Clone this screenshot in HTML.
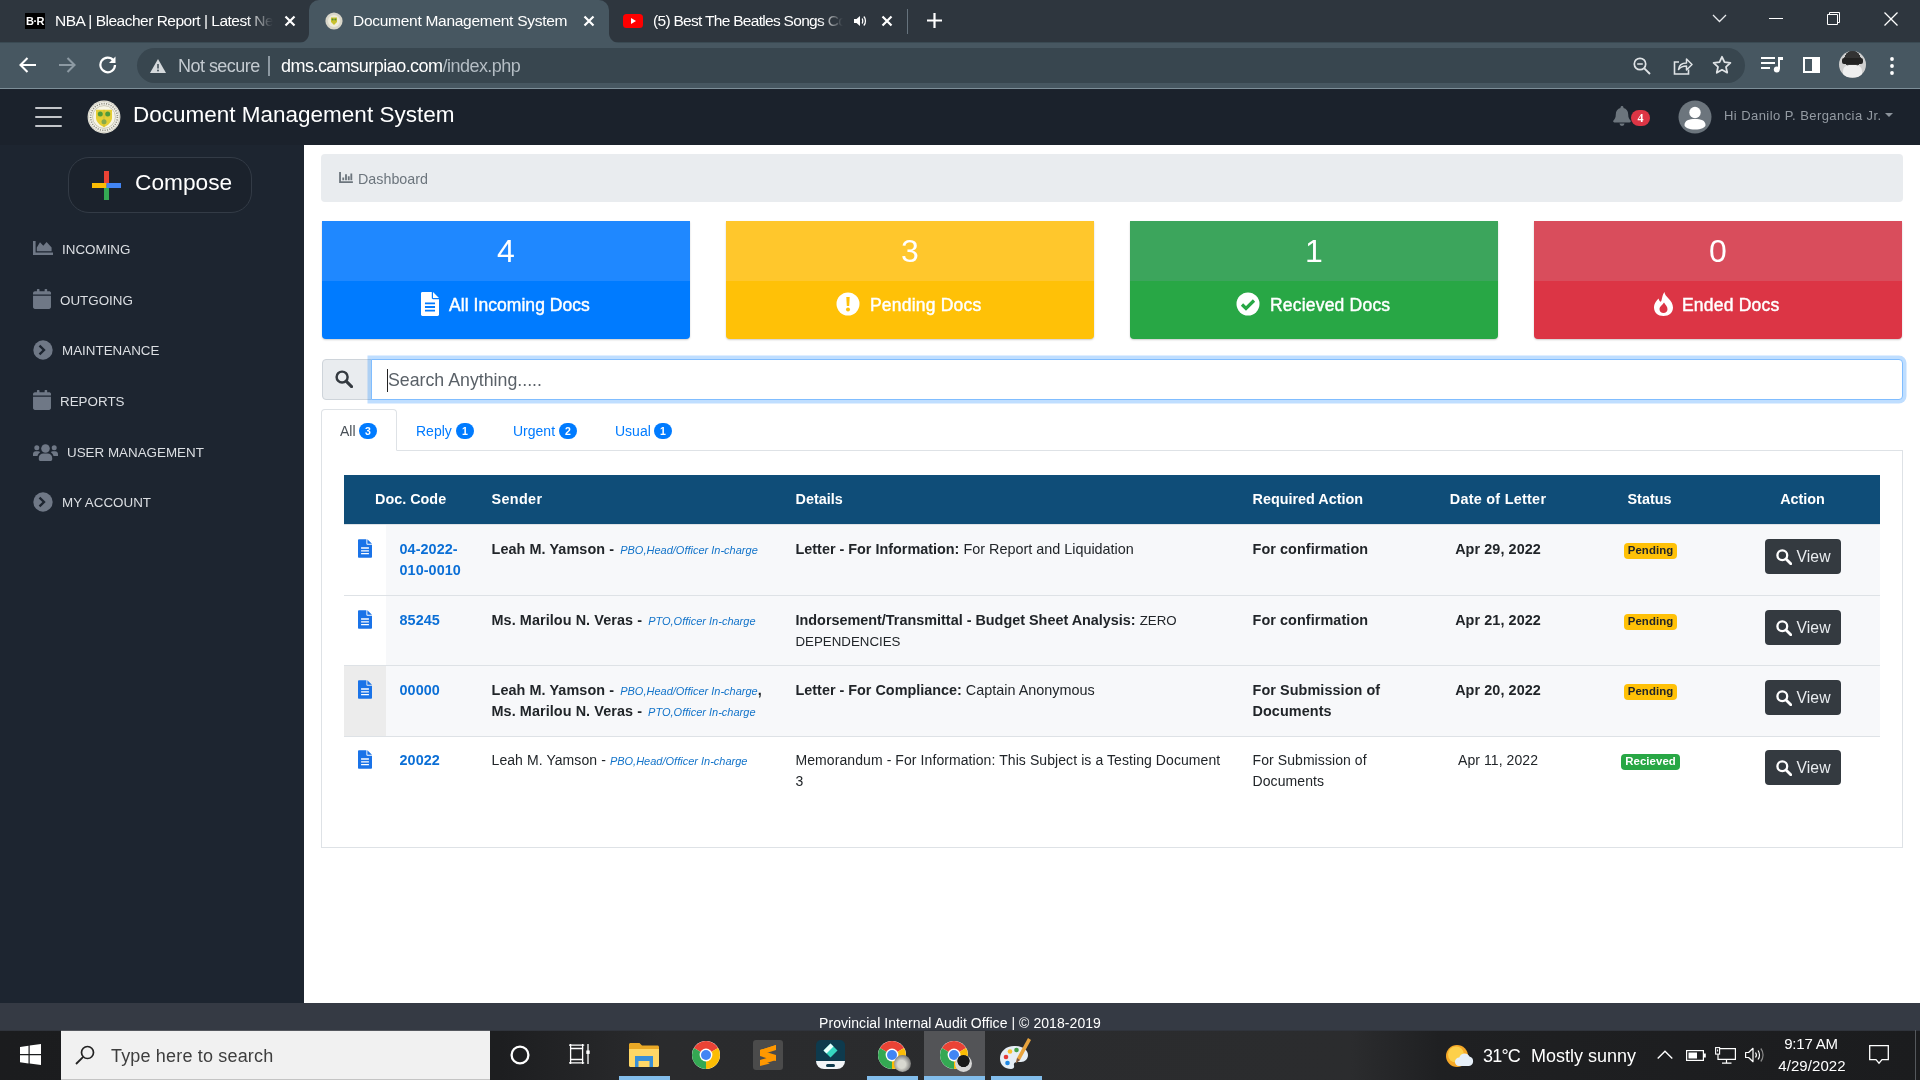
<!DOCTYPE html>
<html lang="en">
<head>
<meta charset="utf-8">
<title>Document Management System</title>
<style>
*{box-sizing:border-box;margin:0;padding:0}
html,body{width:1920px;height:1080px;overflow:hidden;background:#fff;font-family:"Liberation Sans",sans-serif;}
body{position:relative;filter:contrast(1)}
.abs{position:absolute}
svg{display:block}
/* ---------- browser chrome ---------- */
#tabstrip{position:absolute;left:0;top:0;width:1920px;height:42px;background:#2e363e}
#toolbar{position:absolute;left:0;top:42px;width:1920px;height:47px;background:#475761;border-bottom:1px solid #7d8e98;border-top:1px solid #3a4a53}
.tabtitle{position:absolute;top:11px;font-size:15.5px;color:#fff;white-space:nowrap;overflow:hidden;letter-spacing:-0.28px;line-height:20px}
#acttab{position:absolute;left:309px;top:0;width:300px;height:43px;background:#475761;border-radius:10px 10px 0 0;z-index:3}
#omni{position:absolute;left:137px;top:5px;width:1608px;height:35px;border-radius:18px;background:#38464f}

.ico{position:absolute}
.wc{position:absolute;top:0;width:46px;height:36px}
.tb-t{position:absolute;white-space:nowrap;line-height:22px;top:12px;font-size:18px;letter-spacing:-0.53px}
#tabstrip > *{z-index:4}
#acttab:before,#acttab:after{content:'';position:absolute;bottom:0;width:10px;height:10px}
#acttab:before{left:-10px;background:radial-gradient(circle at 0 0,transparent 9.5px,#475761 10.5px)}
#acttab:after{right:-10px;background:radial-gradient(circle at 100% 0,transparent 9.5px,#475761 10.5px)}
/* ---------- site ---------- */
#nav{position:absolute;left:0;top:89px;width:1920px;height:56px;background:#1b222c}
#side{position:absolute;left:0;top:145px;width:304px;height:858px;background:#1d2530}
#main{position:absolute;left:304px;top:145px;width:1616px;height:858px;background:#fff}

#nav .title{position:absolute;left:133px;top:11px;font-size:22.5px;line-height:30px;color:#fff;white-space:nowrap}
.hb{position:absolute;left:35px;width:27px;height:2px;background:#c3c6ca;border-radius:1px}
#side .mi{position:absolute;left:0;width:304px;height:20px;color:#dcdfe3;font-size:13.4px;line-height:20px;white-space:nowrap}
#side .mi span{position:absolute;top:1px}
#side .mi svg{position:absolute}
#compose{position:absolute;left:68px;top:12px;width:184px;height:56px;border:1px solid #333b46;border-radius:21px;background:#1b222c}
#compose span{position:absolute;left:66px;top:8.5px;font-size:22.7px;line-height:30px;color:#fff}

/* ---------- main ---------- */
#bc{position:absolute;left:17px;top:9px;width:1582px;height:47.5px;background:#e9ecef;border-radius:4px}
#bc span{position:absolute;left:37px;top:16px;font-size:14.3px;line-height:18px;color:#6c757d}
.card{position:absolute;top:76px;width:368px;height:118px;border-radius:1px 1px 4px 4px;overflow:hidden;box-shadow:0 1px 2px rgba(0,0,0,.2),inset 0 1px 0 rgba(0,0,0,.12)}
.card .n{position:absolute;left:0;top:0;width:100%;height:60px;color:#fff;font-size:32px;line-height:60px;text-align:center}
.card .l{position:absolute;left:0;top:60px;width:100%;height:58px;color:#fff;font-size:17.5px;line-height:22px;white-space:nowrap;-webkit-text-stroke:.45px #fff;letter-spacing:.2px}
.card .l span{position:absolute;top:13px}
.card .l svg{position:absolute}
#sprep{position:absolute;left:18px;top:214px;width:50px;height:41px;background:#e9ecef;border:1px solid #ced4da;border-radius:4px 0 0 4px}
#sinp{position:absolute;left:67px;top:214px;width:1532px;height:41px;background:#fff;border:1px solid #80bdff;border-radius:0 4px 4px 0;box-shadow:0 0 0 3.5px rgba(0,123,255,.25)}
#sinp span{position:absolute;left:16px;top:9px;font-size:17.75px;line-height:22px;color:#5a6168;white-space:nowrap}
#sinp i{position:absolute;left:15px;top:9px;width:1px;height:23px;background:#222}
#tabsline{position:absolute;left:17px;top:305px;width:1582px;height:1px;background:#dee2e6}
#tabact{position:absolute;left:17px;top:264px;width:76px;height:42px;border:1px solid #dee2e6;border-bottom-color:#fff;border-radius:4px 4px 0 0;background:#fff}
.tb{position:absolute;top:277px;font-size:14px;line-height:18px;color:#007bff;white-space:nowrap}
.bdg{position:absolute;top:278px;width:18px;height:16px;border-radius:8px;background:#007bff;color:#fff;font-size:10.5px;font-weight:bold;line-height:16px;text-align:center}
#tabbox{position:absolute;left:17px;top:305px;width:1582px;height:398px;border:1px solid #dee2e6;border-top:none}
table{position:absolute;left:40px;top:330px;width:1536px;border-collapse:separate;border-spacing:0;table-layout:fixed;font-size:14.4px;line-height:21px;color:#212529}
th{background:#0f4d78;color:#fff;font-weight:bold;text-align:left;padding:14px 13.5px 0;height:49px;vertical-align:top}
td{padding:14px 13.5px 0;vertical-align:top;border-top:1px solid #dee2e6;height:71px;background:#f7f8fa}
tbody tr:nth-child(2n) td{height:70px}
tr.u td{font-weight:bold;letter-spacing:.08px}
tr.u td.d{font-weight:normal;letter-spacing:0}
tr.r td{background:#fff;font-size:14px;letter-spacing:.08px;padding-top:13px}
tr.r em{margin-left:0}
td.c,th.c{text-align:center}
a.dc{color:#0b6fd6;font-weight:bold}
em{font-size:11px;line-height:1;color:#1273c9;font-style:italic;font-weight:normal;letter-spacing:0;margin-left:2px}
.st{display:inline-block;width:53px;height:16px;border-radius:4px;font-size:11.4px;font-weight:bold;line-height:15px;text-align:center;position:relative;top:4px;left:1px;vertical-align:top}
.st.p{background:#ffc107;color:#212529}
.st.g{background:#28a745;color:#fff;width:59px}
.vb{display:inline-block;position:relative;width:76px;height:35px;border-radius:4px;background:#343a40;color:#e9ecef;font-size:15.7px;line-height:35px;font-weight:normal;text-align:left;margin-top:0}
.vb svg{position:absolute;left:11px;top:10px}
.vb span{position:absolute;left:32px;top:0}
#footer{position:absolute;left:0;top:1003px;width:1920px;height:27px;background:#353a44}
#taskbar{position:absolute;left:0;top:1030px;width:1920px;height:50px;background:linear-gradient(90deg,#1b1c1e 0,#1d1e20 500px,#2a2b2d 660px,#2b2c2e 1350px,#1f2022 1440px,#1b1c1e 1920px);overflow:hidden;box-shadow:inset 0 1px 0 #30343c}

/* ---------- footer / taskbar ---------- */
#footer span{position:absolute;left:0;width:1920px;top:12px;text-align:center;color:#fff;font-size:14px;line-height:16px;letter-spacing:.06px;white-space:nowrap}
#taskbar .t{position:absolute;color:#fff;white-space:nowrap;font-family:"Liberation Sans",sans-serif}
#tsearch{position:absolute;left:61px;top:0;width:429px;height:50px;background:#f1f1f1;border-bottom:1px solid #c4c4c4;border-top:1px solid #55585f}
#tsearch span{position:absolute;left:50px;top:12.5px;font-size:18px;line-height:24px;color:#3e3e3e;letter-spacing:.17px}
.ul{position:absolute;top:46px;height:4px;background:#82bdeb}
</style>
</head>
<body>
<div id="tabstrip">
<div id="acttab"></div>
<!-- tab 1 -->
<div class="abs" style="left:25px;top:13px;width:20px;height:16px;background:#000;color:#fff;font-size:11px;font-weight:bold;line-height:16px;text-align:center;letter-spacing:-0.5px;font-family:'Liberation Sans Narrow','Liberation Sans',sans-serif">B·R</div>
<div class="tabtitle" id="tt1" style="left:55px;width:218px;letter-spacing:-.5px;-webkit-mask-image:linear-gradient(90deg,#000 88%,transparent)">NBA | Bleacher Report | Latest News</div>
<svg class="ico" style="left:284px;top:15px" width="12" height="12" viewBox="0 0 12 12"><path d="M1.5 1.5L10.5 10.5M10.5 1.5L1.5 10.5" stroke="#fff" stroke-width="2.2"/></svg>
<!-- tab 2 -->
<svg class="ico" style="left:325px;top:12px" width="18" height="18" viewBox="0 0 18 18"><circle cx="9" cy="9" r="8.6" fill="#d9d6c9"/><circle cx="9" cy="9" r="6" fill="#efecd9"/><path d="M6 5.5h6v4.5l-3 3-3-3z" fill="#c9c12d"/><circle cx="7.6" cy="7.6" r="1" fill="#4c8b3b"/><circle cx="10.4" cy="7.6" r="1" fill="#4c8b3b"/></svg>
<div class="tabtitle" id="tt2" style="left:353px;width:220px">Document Management System</div>
<svg class="ico" style="left:583px;top:15px" width="12" height="12" viewBox="0 0 12 12"><path d="M1.5 1.5L10.5 10.5M10.5 1.5L1.5 10.5" stroke="#fff" stroke-width="2.2"/></svg>
<!-- tab 3 -->
<svg class="ico" style="left:623px;top:14px" width="20" height="14" viewBox="0 0 20 14"><rect width="20" height="14" rx="3.5" fill="#f00"/><path d="M8 4l5 3-5 3z" fill="#fff"/></svg>
<div class="tabtitle" id="tt3" style="left:653px;width:190px;letter-spacing:-.7px;-webkit-mask-image:linear-gradient(90deg,#000 88%,transparent)">(5) Best The Beatles Songs Collection</div>
<svg class="ico" style="left:853px;top:14px" width="14" height="14" viewBox="0 0 14 14"><path d="M1 5h2.5l3.5-3v10l-3.5-3H1z" fill="#fff"/><path d="M9 4.5c1 .8 1 4.200 0 5M10.800 2.500c2.200 2 2.200 7 0 9" stroke="#fff" stroke-width="1.300" fill="none"/></svg>
<svg class="ico" style="left:881px;top:15px" width="12" height="12" viewBox="0 0 12 12"><path d="M1.500 1.500L10.500 10.500M10.500 1.500L1.500 10.500" stroke="#fff" stroke-width="2.200"/></svg>
<div class="abs" style="left:907px;top:9px;width:1px;height:25px;background:#66737d"></div>
<svg class="ico" style="left:927px;top:13px" width="15" height="15" viewBox="0 0 15 15"><path d="M7.500 0v15M0 7.500h15" stroke="#fff" stroke-width="2.200"/></svg>
<!-- window controls -->
<svg class="ico" style="left:1712px;top:14px" width="15" height="9" viewBox="0 0 15 9"><path d="M1 1l6.500 6.500L14 1" stroke="#e8eaed" stroke-width="1.300" fill="none"/></svg>
<svg class="ico" style="left:1769px;top:18px" width="14" height="1" viewBox="0 0 14 1"><path d="M0 .5h14" stroke="#fff" stroke-width="1"/></svg>
<svg class="ico" style="left:1827px;top:12px" width="13" height="13" viewBox="0 0 13 13"><path d="M.5 2.500h10v10H.5z" stroke="#fff" stroke-width="1" fill="none"/><path d="M2.500 2.500V.5h10v10h-2" stroke="#fff" stroke-width="1" fill="none"/></svg>
<svg class="ico" style="left:1884px;top:12px" width="14" height="14" viewBox="0 0 14 14"><path d="M.5.5l13 13M13.500.5l-13 13" stroke="#fff" stroke-width="1.300"/></svg>
</div>
<div id="toolbar">
<svg class="ico" style="left:19px;top:14px" width="17" height="16" viewBox="0 0 17 16"><path d="M8.500 1L1.500 8l7 7M1.500 8H17" stroke="#fff" stroke-width="2.100" fill="none"/></svg>
<svg class="ico" style="left:59px;top:14px" width="17" height="16" viewBox="0 0 17 16"><path d="M8.500 1l7 7-7 7M15.500 8H0" stroke="#8d9aa3" stroke-width="2.100" fill="none"/></svg>
<svg class="ico" style="left:98px;top:12px" width="19" height="19" viewBox="0 0 19 19"><path d="M15.500 5.500A7.300 7.300 0 1 0 17 10" stroke="#fff" stroke-width="2.200" fill="none"/><path d="M17.500 1.500v6.500H11z" fill="#fff"/></svg>
<div id="omni">
<svg class="ico" style="left:13px;top:11px" width="16" height="14" viewBox="0 0 16 14"><path d="M8 0l8 14H0z" fill="#d5d9dc"/><path d="M8 5v4.500" stroke="#3a4852" stroke-width="1.500"/><circle cx="8" cy="11.500" r=".9" fill="#3a4852"/></svg>
<div class="tb-t" id="ns" style="left:41px;top:7px;color:#c3cad0">Not secure</div>
<div class="abs" style="left:131px;top:8px;width:2px;height:20px;background:#8d99a2"></div>
<div class="tb-t" id="url" style="left:144px;top:7px;color:#fff">dms.camsurpiao.com<span style="color:#b4bdc4">/index.php</span></div>
<svg class="ico" style="left:1496px;top:9px" width="18" height="18" viewBox="0 0 18 18"><circle cx="7" cy="7" r="5.700" stroke="#dfe3e6" stroke-width="1.700" fill="none"/><path d="M11.300 11.300L17 17" stroke="#dfe3e6" stroke-width="1.900"/><path d="M4.200 7h5.600" stroke="#dfe3e6" stroke-width="1.500"/></svg>
<svg class="ico" style="left:1536px;top:8px" width="20" height="19" viewBox="0 0 20 19"><path d="M6 6H1.500v12h14v-4.500" stroke="#dfe3e6" stroke-width="1.600" fill="none"/><path d="M5.500 13.500c.5-4 3.500-6.500 8-6.500V3l5.500 5.500-5.500 5.500v-4c-3.500 0-6 1-8 3.500z" stroke="#dfe3e6" stroke-width="1.500" fill="none" stroke-linejoin="round"/></svg>
<svg class="ico" style="left:1575px;top:7px" width="20" height="20" viewBox="0 0 20 20"><path d="M10 1.800l2.500 5.400 5.900.7-4.400 4 1.200 5.800L10 14.800l-5.200 2.900L6 11.900l-4.400-4 5.900-.7z" stroke="#dfe3e6" stroke-width="1.800" fill="none" stroke-linejoin="round"/></svg>
</div>
<svg class="ico" style="left:1761px;top:13px" width="22" height="18" viewBox="0 0 22 18"><path d="M0 2h14M0 7h14M0 12h9" stroke="#fff" stroke-width="2.200"/><path d="M18 2v11" stroke="#fff" stroke-width="2"/><path d="M17 1h5v3h-5z" fill="#fff"/><circle cx="15.800" cy="13.500" r="3" fill="#fff"/></svg>
<svg class="ico" style="left:1803px;top:14px" width="17" height="16" viewBox="0 0 17 16"><rect x="1" y="1" width="15" height="14" stroke="#fff" stroke-width="2" fill="none"/><rect x="9" y="1" width="7" height="14" fill="#fff"/></svg>
<div class="abs" style="left:1839px;top:8px;width:27px;height:27px;border-radius:50%;background:radial-gradient(circle at 50% 30%,#333 0 35%,#cfcfcf 36% 100%);overflow:hidden"><div class="abs" style="left:4px;top:14px;width:19px;height:12px;background:#eee;border-radius:6px 6px 0 0"></div><div class="abs" style="left:3px;top:7px;width:21px;height:6px;background:#222;border-radius:2px"></div></div>
<svg class="ico" style="left:1890px;top:14px" width="4" height="18" viewBox="0 0 4 18"><circle cx="2" cy="2" r="1.900" fill="#fff"/><circle cx="2" cy="9" r="1.900" fill="#fff"/><circle cx="2" cy="16" r="1.900" fill="#fff"/></svg>
</div>
<div id="nav">
<div class="hb" style="top:18px"></div><div class="hb" style="top:27px"></div><div class="hb" style="top:36px"></div>
<svg class="ico" style="left:87px;top:11px" width="34" height="34" viewBox="0 0 34 34"><circle cx="17" cy="17" r="16.400" fill="#f2f1ea"/><circle cx="17" cy="17" r="15.600" fill="none" stroke="#c9c7b8" stroke-width=".8"/><circle cx="17" cy="17" r="13.400" fill="none" stroke="#8f8e7e" stroke-width="1.600" stroke-dasharray="1.100 1.300"/><circle cx="17" cy="17" r="11.400" fill="#f7f5e6" stroke="#b9b6a0" stroke-width=".7"/><path d="M9 9.800h16v8c0 4.500-3.800 7.200-8 9.400-4.200-2.200-8-4.900-8-9.400z" fill="#e6cf34"/><path d="M10.300 11h6v6.500h-6zM17.700 11h6v6.500h-6z" fill="#dccb3c"/><path d="M17 9.800v17.400" stroke="#c9b52a" stroke-width=".7"/><circle cx="13.300" cy="14" r="2.500" fill="#4f9a3a"/><circle cx="20.700" cy="14" r="2.500" fill="#4f9a3a"/><circle cx="17" cy="21.800" r="2.500" fill="#86a94c"/></svg>
<div class="title" id="ttl">Document Management System</div>
<svg class="ico" style="left:1613px;top:17px" width="18" height="20" viewBox="0 0 18 20"><path d="M9 0c.9 0 1.500.6 1.500 1.500v.6c2.900.7 4.700 3.100 4.700 6.200 0 3.700 1.200 5.100 2.300 6.200.7.700.2 2-.9 2H1.400c-1.100 0-1.600-1.300-.9-2 1.100-1.100 2.300-2.500 2.300-6.200 0-3.100 1.800-5.500 4.700-6.200v-.6C7.500.6 8.100 0 9 0zM6.500 17.500h5a2.500 2.500 0 0 1-5 0z" fill="#6c757d"/></svg>
<div class="abs" style="left:1631px;top:21px;width:19px;height:16px;border-radius:8px;background:#dc3545;color:#fff;font:bold 12px/16px 'Liberation Serif',serif;text-align:center">4</div>
<svg class="ico" style="left:1678px;top:11px" width="34" height="34" viewBox="0 0 34 34"><circle cx="17" cy="17" r="16.500" fill="#6c757d"/><circle cx="17" cy="12.500" r="5.700" fill="#fff"/><path d="M6.500 25c0-4.500 4.500-6 10.500-6s10.500 1.500 10.500 6c0 2.500-4.500 4.500-10.500 4.500S6.500 27.500 6.500 25z" fill="#fff"/></svg>
<div class="abs" id="hi" style="left:1724px;top:19px;font-size:13px;line-height:16px;color:#949ba3;white-space:nowrap;letter-spacing:.43px">Hi Danilo P. Bergancia Jr.</div>
<svg class="ico" style="left:1885px;top:24px" width="8" height="4" viewBox="0 0 8 4"><path d="M0 0h8L4 4z" fill="#8c939b"/></svg>
</div>
<div id="side">
<div id="compose"><svg class="ico" style="left:23px;top:13px" width="29" height="29" viewBox="0 0 29 29"><rect x="12" y="0" width="5" height="14.500" fill="#ea4335"/><rect x="12" y="14.500" width="5" height="14.500" fill="#34a853"/><rect x="0" y="12" width="14.500" height="5" fill="#fbbc04"/><rect x="14.500" y="12" width="14.500" height="5" fill="#4285f4"/></svg><span id="cmp">Compose</span></div>
<div class="mi" style="top:94px"><svg style="left:33px;top:2px" width="20" height="14" viewBox="0 0 20 14"><path d="M0 0h2.600v11.400H20V14H0z" fill="#6f7886"/><path d="M3.800 10.200V6.500L7 1.200l3.300 3.600L13.600 1l5 5.500v3.700z" fill="#6f7886"/></svg><span id="m1" style="left:62px">INCOMING</span></div>
<div class="mi" style="top:145px"><svg style="left:33px;top:-1px" width="18" height="20" viewBox="0 0 17.500 19.500"><path d="M0 6.500h17.500V17.600c0 1-.8 1.900-1.900 1.900H1.900C.8 19.500 0 18.600 0 17.600zM0 5.300V4.200c0-1 .8-1.900 1.900-1.900h1.900V.6c0-.3.300-.6.600-.6h1.300c.3 0 .6.300.6.600v1.700h5V.6c0-.3.300-.6.600-.6h1.300c.3 0 .6.300.6.600v1.700h1.900c1 0 1.900.8 1.900 1.900v1.100z" fill="#6f7886"/></svg><span id="m2" style="left:60px">OUTGOING</span></div>
<div class="mi" style="top:195px"><svg style="left:33px;top:0px" width="20" height="20" viewBox="0 0 20 20"><circle cx="10" cy="10" r="9.700" fill="#6f7886"/><path d="M7.300 4.800l5.400 5.200-5.400 5.200-1.600-1.600 3.700-3.600-3.700-3.600z" fill="#1d2530"/></svg><span id="m3" style="left:62px">MAINTENANCE</span></div>
<div class="mi" style="top:246px"><svg style="left:33px;top:-1px" width="18" height="20" viewBox="0 0 17.500 19.500"><path d="M0 6.500h17.500V17.600c0 1-.8 1.900-1.900 1.900H1.900C.8 19.500 0 18.600 0 17.600zM0 5.300V4.200c0-1 .8-1.900 1.900-1.900h1.900V.6c0-.3.300-.6.600-.6h1.300c.3 0 .6.300.6.600v1.700h5V.6c0-.3.300-.6.600-.6h1.300c.3 0 .6.300.6.600v1.700h1.900c1 0 1.900.8 1.900 1.900v1.100z" fill="#6f7886"/></svg><span id="m4" style="left:60px">REPORTS</span></div>
<div class="mi" style="top:297px"><svg style="left:33px;top:2px" width="25" height="17" viewBox="0 0 25 17"><circle cx="3.800" cy="3.800" r="2.500" fill="#6f7886"/><circle cx="21.200" cy="3.800" r="2.500" fill="#6f7886"/><circle cx="12.500" cy="4.500" r="4.300" fill="#6f7886"/><path d="M0 10c0-1.500 1.200-2.700 2.700-2.700h2.500c.8 0 1.500.3 2 .9-1.500.9-2.500 2.200-2.700 3.800H0zM25 10c0-1.500-1.200-2.700-2.700-2.700h-2.500c-.8 0-1.500.3-2 .9 1.500.9 2.500 2.200 2.700 3.800H25zM5.800 14c0-2.600 2.100-4.400 4.600-4.400h4.200c2.500 0 4.600 1.800 4.600 4.400v1.200c0 1-.8 1.800-1.800 1.800H7.600c-1 0-1.800-.8-1.800-1.800z" fill="#6f7886"/></svg><span id="m5" style="left:67px">USER MANAGEMENT</span></div>
<div class="mi" style="top:347px"><svg style="left:33px;top:0px" width="20" height="20" viewBox="0 0 20 20"><circle cx="10" cy="10" r="9.700" fill="#6f7886"/><path d="M7.300 4.800l5.400 5.200-5.400 5.200-1.600-1.600 3.700-3.600-3.700-3.600z" fill="#1d2530"/></svg><span id="m6" style="left:62px">MY ACCOUNT</span></div>
</div>
<div id="main">
<div id="bc"><svg class="ico" style="left:18px;top:18px" width="14" height="11" viewBox="0 0 15 12"><path d="M0 0h2v10h13v2H0z" fill="#6c757d"/><path d="M3.500 6h2v3h-2zM6.500 2.500h2V9h-2zM9.500 4.500h2V9h-2zM12.300 1.500h2V9h-2z" fill="#6c757d"/></svg><span id="bct">Dashboard</span></div>
<div class="card" style="left:18px;background:#007bff"><div class="n" style="background:#1f88ff">4</div><div class="l"><svg style="left:99px;top:11px" width="18" height="24" viewBox="0 0 15 20"><path d="M0 1.200C0 .5.500 0 1.200 0H9v5c0 .6.400 1 1 1h5v12.800c0 .7-.5 1.200-1.200 1.200H1.200C.5 20 0 19.500 0 18.800zM10 0l5 5h-5z" fill="#fff"/><path d="M3.300 9.500h8.400M3.300 12.500h8.400M3.300 15.500h8.400" stroke="#007bff" stroke-width="1.500"/></svg><span id="c1" style="left:127px;letter-spacing:.05px">All Incoming Docs</span></div></div>
<div class="card" style="left:422px;background:#ffc107"><div class="n" style="background:#ffc72c">3</div><div class="l"><svg style="left:110px;top:11px" width="24" height="24" viewBox="0 0 24 24"><circle cx="12" cy="12" r="11.500" fill="#fff"/><path d="M10.300 5h3.400l-.5 9h-2.400z" fill="#ffc107"/><circle cx="12" cy="17.600" r="2" fill="#ffc107"/></svg><span id="c2" style="left:144px">Pending Docs</span></div></div>
<div class="card" style="left:826px;background:#28a745"><div class="n" style="background:#3ca55c">1</div><div class="l"><svg style="left:106px;top:11px" width="24" height="24" viewBox="0 0 24 24"><circle cx="12" cy="12" r="11.500" fill="#fff"/><path d="M6 12.500l4 4 8-8" stroke="#28a745" stroke-width="3.200" fill="none"/></svg><span id="c3" style="left:140px">Recieved Docs</span></div></div>
<div class="card" style="left:1230px;background:#dc3545"><div class="n" style="background:#d94d5c">0</div><div class="l"><svg style="left:120px;top:11px" width="19" height="24" viewBox="0 0 19 24"><path d="M10.500 0c0 5 8.500 8 8.500 15.500 0 5-4 8.500-9.500 8.500S0 20.500 0 15.500C0 11 3 8.500 4.500 6.500c1 3 2 3.500 2.500 3C8 8.500 8 3 10.500 0z" fill="#fff"/><path d="M9.500 21c-2.300 0-4-1.500-4-3.800 0-2.500 2.500-3.700 4.500-6.700 1.500 2.500 3.500 4 3.500 6.700 0 2.300-1.700 3.800-4 3.800z" fill="#dc3545"/></svg><span id="c4" style="left:148px">Ended Docs</span></div></div>
<div id="sprep"><svg class="ico" style="left:12px;top:10px" width="18" height="18" viewBox="0 0 19 19"><circle cx="7.500" cy="7.500" r="5.800" stroke="#343a40" stroke-width="2.600" fill="none"/><path d="M12 12l5.500 5.500" stroke="#343a40" stroke-width="3.200" stroke-linecap="round"/></svg></div>
<div id="sinp"><i></i><span id="sph">Search Anything.....</span></div>
<div id="tabsline"></div><div id="tabact"></div>
<div class="tb" id="t1" style="left:36px;color:#495057">All</div><div class="bdg" style="left:55px">3</div>
<div class="tb" id="t2" style="left:112px">Reply</div><div class="bdg" style="left:152px">1</div>
<div class="tb" id="t3" style="left:209px">Urgent</div><div class="bdg" style="left:255px">2</div>
<div class="tb" id="t4" style="left:311px">Usual</div><div class="bdg" style="left:350px">1</div>
<div id="tabbox"></div>
<table>
<colgroup><col style="width:42px"><col style="width:92px"><col style="width:304px"><col style="width:457px"><col style="width:183px"><col style="width:152px"><col style="width:151px"><col style="width:155px"></colgroup>
<thead><tr><th colspan="2" style="padding-left:31px"><span id="h1">Doc. Code</span></th><th><span id="h2" style="letter-spacing:.35px">Sender</span></th><th><span id="h3">Details</span></th><th><span id="h4">Required Action</span></th><th class="c"><span id="h5" style="letter-spacing:.27px">Date of Letter</span></th><th class="c"><span id="h6">Status</span></th><th class="c"><span id="h7">Action</span></th></tr></thead>
<tbody>
<tr class="u"><td class="i" style="background:#fff"><svg class="di" width="14" height="19" viewBox="0 0 15 20"><path d="M0 1.200C0 .5.500 0 1.200 0H9v5c0 .6.400 1 1 1h5v12.800c0 .7-.5 1.200-1.200 1.200H1.200C.5 20 0 19.500 0 18.800zM10 0l5 5h-5z" fill="#1a73e8"/><path d="M3.300 9.500h8.400M3.300 12.500h8.400M3.300 15.500h8.400" stroke="#fff" stroke-width="1.500"/></svg></td><td><a class="dc" id="r1a">04-2022-<br>010-0010</a></td><td><span id="r1b">Leah M. Yamson -</span> <em id="r1e">PBO,Head/Officer In-charge</em></td><td class="d"><b id="r1c">Letter - For Information:</b> <span id="r1d">For Report and Liquidation</span></td><td><span id="r1f">For confirmation</span></td><td class="c"><span id="r1g">Apr 29, 2022</span></td><td class="c"><span class="st p">Pending</span></td><td class="c v"><div class="vb"><svg width="16" height="16" viewBox="0 0 16 16"><circle cx="6.300" cy="6.300" r="4.900" stroke="#fff" stroke-width="2.300" fill="none"/><path d="M10 10l4.800 4.800" stroke="#fff" stroke-width="2.800" stroke-linecap="round"/></svg><span>View</span></div></td></tr>
<tr class="u"><td class="i" style="background:#fff"><svg class="di" width="14" height="19" viewBox="0 0 15 20"><path d="M0 1.200C0 .5.500 0 1.200 0H9v5c0 .6.400 1 1 1h5v12.800c0 .7-.5 1.200-1.200 1.200H1.200C.5 20 0 19.500 0 18.800zM10 0l5 5h-5z" fill="#1a73e8"/><path d="M3.300 9.500h8.400M3.300 12.500h8.400M3.300 15.500h8.400" stroke="#fff" stroke-width="1.500"/></svg></td><td><a class="dc">85245</a></td><td><span id="r2b">Ms. Marilou N. Veras -</span> <em>PTO,Officer In-charge</em></td><td class="d"><b id="r2c">Indorsement/Transmittal - Budget Sheet Analysis:</b> <span style="font-size:13.3px">ZERO</span><br><span style="font-size:13.3px">DEPENDENCIES</span></td><td>For confirmation</td><td class="c">Apr 21, 2022</td><td class="c"><span class="st p">Pending</span></td><td class="c v"><div class="vb"><svg width="16" height="16" viewBox="0 0 16 16"><circle cx="6.300" cy="6.300" r="4.900" stroke="#fff" stroke-width="2.300" fill="none"/><path d="M10 10l4.800 4.800" stroke="#fff" stroke-width="2.800" stroke-linecap="round"/></svg><span>View</span></div></td></tr>
<tr class="u"><td class="i" style="background:#ececec"><svg class="di" width="14" height="19" viewBox="0 0 15 20"><path d="M0 1.200C0 .5.500 0 1.200 0H9v5c0 .6.400 1 1 1h5v12.800c0 .7-.5 1.200-1.200 1.200H1.200C.5 20 0 19.500 0 18.800zM10 0l5 5h-5z" fill="#1a73e8"/><path d="M3.300 9.500h8.400M3.300 12.500h8.400M3.300 15.500h8.400" stroke="#fff" stroke-width="1.500"/></svg></td><td><a class="dc">00000</a></td><td style="white-space:nowrap">Leah M. Yamson - <em>PBO,Head/Officer In-charge</em>,<br>Ms. Marilou N. Veras - <em>PTO,Officer In-charge</em></td><td class="d"><b>Letter - For Compliance:</b> Captain Anonymous</td><td>For Submission of<br>Documents</td><td class="c">Apr 20, 2022</td><td class="c"><span class="st p">Pending</span></td><td class="c v"><div class="vb"><svg width="16" height="16" viewBox="0 0 16 16"><circle cx="6.300" cy="6.300" r="4.900" stroke="#fff" stroke-width="2.300" fill="none"/><path d="M10 10l4.800 4.800" stroke="#fff" stroke-width="2.800" stroke-linecap="round"/></svg><span>View</span></div></td></tr>
<tr class="r"><td class="i"><svg class="di" width="14" height="19" viewBox="0 0 15 20"><path d="M0 1.200C0 .5.500 0 1.200 0H9v5c0 .6.400 1 1 1h5v12.800c0 .7-.5 1.200-1.200 1.200H1.200C.5 20 0 19.500 0 18.800zM10 0l5 5h-5z" fill="#1a73e8"/><path d="M3.300 9.500h8.400M3.300 12.500h8.400M3.300 15.500h8.400" stroke="#fff" stroke-width="1.500"/></svg></td><td><a class="dc" style="font-size:14.4px">20022</a></td><td><span id="r4b">Leah M. Yamson -</span> <em>PBO,Head/Officer In-charge</em></td><td class="d" style="white-space:nowrap"><span id="r4c">Memorandum - For Information: This Subject is a Testing Document</span><br>3</td><td>For Submission of<br>Documents</td><td class="c"><span id="r4g">Apr 11, 2022</span></td><td class="c"><span class="st g">Recieved</span></td><td class="c v"><div class="vb"><svg width="16" height="16" viewBox="0 0 16 16"><circle cx="6.300" cy="6.300" r="4.900" stroke="#fff" stroke-width="2.300" fill="none"/><path d="M10 10l4.800 4.800" stroke="#fff" stroke-width="2.800" stroke-linecap="round"/></svg><span>View</span></div></td></tr>
</tbody></table>
</div>
<div id="footer"><span id="ft">Provincial Internal Audit Office | © 2018-2019</span></div>
<div id="taskbar">
<svg class="ico" style="left:20px;top:14px" width="21" height="21" viewBox="0 0 21 21"><path d="M0 3l8.500-1.200v8.200H0zM9.700 1.600L21 0v10H9.700zM0 11.200h8.500v8.200L0 18.200zM9.700 11.200H21v9.800L9.700 19.400z" fill="#fff"/></svg>
<div id="tsearch"><svg class="ico" style="left:14px;top:14px" width="20" height="20" viewBox="0 0 20 20"><circle cx="12.500" cy="7.500" r="6" stroke="#222" stroke-width="1.700" fill="none"/><path d="M8.200 11.800L1 19" stroke="#222" stroke-width="1.800"/></svg><span id="tst">Type here to search</span></div>
<svg class="ico" style="left:509px;top:14px" width="22" height="22" viewBox="0 0 22 22"><circle cx="11" cy="11" r="8.400" stroke="#fff" stroke-width="2.300" fill="none"/></svg>
<svg class="ico" style="left:569px;top:14px" width="22" height="20" viewBox="0 0 22 20"><path d="M1.600 4.500h12v11h-12z" stroke="#fff" stroke-width="1.300" fill="none"/><path d="M0 1.200h15.200M0 18.800h15.200" stroke="#fff" stroke-width="1.300"/><path d="M1.600 0v4.500M13.600 0v4.500M1.600 15.500V20M13.600 15.500V20" stroke="#fff" stroke-width="1.300"/><path d="M19 0v20" stroke="#fff" stroke-width="1.300"/><rect x="17.300" y="6.500" width="3.400" height="3.400" fill="#fff"/></svg>
<!-- file explorer -->
<svg class="ico" style="left:629px;top:12px" width="30" height="25" viewBox="0 0 30 25"><path d="M0 2.500C0 1.700.7 1 1.500 1h9l2.500 2.500h15.500c.8 0 1.500.7 1.500 1.500v17H0z" fill="#e9a825"/><path d="M0 7h30v16.500c0 .8-.7 1.500-1.500 1.500h-27C.7 25 0 24.300 0 23.500z" fill="#ffd766"/><path d="M6 14h18v11H6z" fill="#3a8fd6"/><path d="M9.500 19h11v6h-11z" fill="#ffd766"/></svg>
<div class="ul" style="left:619px;width:51px"></div>
<svg class="ico" style="left:691px;top:10px" width="30" height="30" viewBox="0 0 30 30"><circle cx="15" cy="15" r="14" fill="#fff"/><path d="M15 15L2.900 8A14 14 0 0 1 27.100 8z" fill="#ea4335"/><path d="M15 15L27.100 8A14 14 0 0 1 15 29z" fill="#fbbc04"/><path d="M15 15L15 29A14 14 0 0 1 2.900 8z" fill="#34a853"/><circle cx="15" cy="15" r="6.400" fill="#fff"/><circle cx="15" cy="15" r="5" fill="#4285f4"/></svg>
<!-- sublime -->
<div class="abs" style="left:753px;top:10px;width:30px;height:30px;border-radius:3px;background:#4b4b4b"></div>
<svg class="ico" style="left:759px;top:14px" width="18" height="22" viewBox="0 0 18 22"><path d="M17 1L1 6v6l16 5v-6L7 8l10-3zM1 11v5.500l10 3L1 22z" fill="#ff9800"/><path d="M1 6l16-5v5L1 11zM17 11L1 16v5l16-5z" fill="#ff9800"/></svg>
<!-- filmora-like -->
<div class="abs" style="left:816px;top:10px;width:29px;height:23px;border-radius:5px 5px 0 0;background:#0e3a4d"></div>
<div class="abs" style="left:816px;top:31px;width:29px;height:8px;border-radius:0 0 9px 9px;background:#f2f5f7"></div>
<svg class="ico" style="left:821px;top:12px" width="19" height="19" viewBox="0 0 19 19"><path d="M9.500 1.500l7 7-7 7-7-7z" fill="#35d6c0"/><path d="M9.500 1.500l3 3-7 7-3-3z" fill="#e8fffb"/></svg>
<div class="abs" style="left:826px;top:34px;width:9px;height:3px;background:#0e3a4d;border-radius:2px"></div>
<svg class="ico" style="left:877px;top:10px" width="30" height="30" viewBox="0 0 30 30"><circle cx="15" cy="15" r="14" fill="#fff"/><path d="M15 15L2.900 8A14 14 0 0 1 27.100 8z" fill="#ea4335"/><path d="M15 15L27.100 8A14 14 0 0 1 15 29z" fill="#fbbc04"/><path d="M15 15L15 29A14 14 0 0 1 2.900 8z" fill="#34a853"/><circle cx="15" cy="15" r="6.400" fill="#fff"/><circle cx="15" cy="15" r="5" fill="#4285f4"/></svg>
<div class="abs" style="left:894px;top:25px;width:17px;height:17px;border-radius:50%;background:radial-gradient(circle at 45% 55%,#d8d8d0 0 30%,#6f6f6f 75%)"></div>
<div class="ul" style="left:867px;width:51px"></div>
<div class="abs" style="left:924px;top:1px;width:61px;height:49px;background:#535457"></div>
<svg class="ico" style="left:939px;top:10px" width="30" height="30" viewBox="0 0 30 30"><circle cx="15" cy="15" r="14" fill="#fff"/><path d="M15 15L2.900 8A14 14 0 0 1 27.100 8z" fill="#ea4335"/><path d="M15 15L27.100 8A14 14 0 0 1 15 29z" fill="#fbbc04"/><path d="M15 15L15 29A14 14 0 0 1 2.900 8z" fill="#34a853"/><circle cx="15" cy="15" r="6.400" fill="#fff"/><circle cx="15" cy="15" r="5" fill="#4285f4"/></svg>
<div class="abs" style="left:955px;top:25px;width:17px;height:17px;border-radius:50%;background:radial-gradient(circle at 50% 35%,#1a1a1a 0 42%,#d6d6d6 46%)"></div>
<div class="ul" style="left:924px;width:61px"></div>
<!-- paint -->
<svg class="ico" style="left:1000px;top:8px" width="32" height="34" viewBox="0 0 32 34"><path d="M14 8C6 8 0 13.500 0 20.500 0 27 5 31 11 31c2.500 0 3.500-1.500 3-3.500-.5-2 .5-3.500 3-3.500h4c4 0 7-3 7-7 0-5-5.500-9-14-9z" fill="#e6eef5"/><circle cx="6" cy="19" r="2.300" fill="#e53935"/><circle cx="10" cy="13.500" r="2.300" fill="#fbc02d"/><circle cx="16.500" cy="12" r="2.300" fill="#43a047"/><circle cx="7.500" cy="25" r="2.300" fill="#1e88e5"/><path d="M28 0l3 2-11 20-4 3 1-5z" fill="#e8a33d"/><path d="M17 20l3 2-4 3z" fill="#795548"/></svg>
<div class="ul" style="left:991px;width:51px"></div>
<!-- tray -->
<svg class="ico" style="left:1446px;top:14px" width="28" height="24" viewBox="0 0 28 24"><circle cx="11" cy="12" r="11" fill="#f7a928"/><circle cx="10" cy="10.500" r="8" fill="#fdd04a"/><path d="M13 22a4.200 4.200 0 0 1 .3-8.400 5.500 5.500 0 0 1 10.200-1A4.800 4.800 0 0 1 23 22z" fill="#e6eff8"/></svg>
<div class="t" id="tw1" style="left:1483px;top:14px;font-size:18px;line-height:24px;letter-spacing:-.8px">31°C</div>
<div class="t" id="tw2" style="left:1531px;top:14px;font-size:18px;line-height:24px;letter-spacing:0">Mostly sunny</div>
<svg class="ico" style="left:1657px;top:20px" width="16" height="9" viewBox="0 0 16 9"><path d="M.7 8.500L8 1.200l7.300 7.300" stroke="#fff" stroke-width="1.400" fill="none"/></svg>
<svg class="ico" style="left:1686px;top:20px" width="20" height="11" viewBox="0 0 20 11"><rect x=".6" y=".6" width="16.800" height="9.800" stroke="#fff" stroke-width="1.200" fill="none"/><rect x="18" y="3.500" width="1.800" height="4" fill="#fff"/><rect x="2.500" y="2.500" width="8.500" height="6" fill="#fff"/></svg>
<svg class="ico" style="left:1715px;top:17px" width="21" height="17" viewBox="0 0 21 17"><path d="M3 1.600h17.400v10.800H3z" stroke="#fff" stroke-width="1.200" fill="none"/><path d="M11.500 12.500v3M7 16.200h9.500" stroke="#fff" stroke-width="1.200"/><rect x=".6" y=".6" width="4" height="6.500" stroke="#fff" stroke-width="1.100" fill="#1c1d20"/><path d="M2.600 2.500v2" stroke="#fff" stroke-width="1"/></svg>
<svg class="ico" style="left:1745px;top:17px" width="21" height="16" viewBox="0 0 21 16"><path d="M.6 5.500h3L8 1.300v13.400L3.600 10.500h-3z" stroke="#fff" stroke-width="1.200" fill="none" stroke-linejoin="round"/><path d="M10.500 5.500c1 1.400 1 3.600 0 5M13 3.500c2 2.500 2 6.500 0 9" stroke="#fff" stroke-width="1.200" fill="none"/><path d="M15.800 1.500c3 3.700 3 9.300 0 13" stroke="#8a8a8a" stroke-width="1.200" fill="none"/></svg>
<div class="t" id="tt" style="left:1761px;width:100px;text-align:center;top:3.5px;font-size:15px;line-height:20px;letter-spacing:-.2px">9:17 AM</div>
<div class="t" id="td" style="left:1762px;width:100px;text-align:center;top:26px;font-size:15px;line-height:20px;letter-spacing:.08px">4/29/2022</div>
<svg class="ico" style="left:1869px;top:15px" width="20" height="20" viewBox="0 0 20 20"><path d="M.7.700h18.600v14H13l-3 3.500-3-3.500H.7z" stroke="#fff" stroke-width="1.300" fill="none"/></svg>
<div class="abs" style="left:1915px;top:0;width:1px;height:50px;background:#55585c"></div>
</div>
</body>
</html>
